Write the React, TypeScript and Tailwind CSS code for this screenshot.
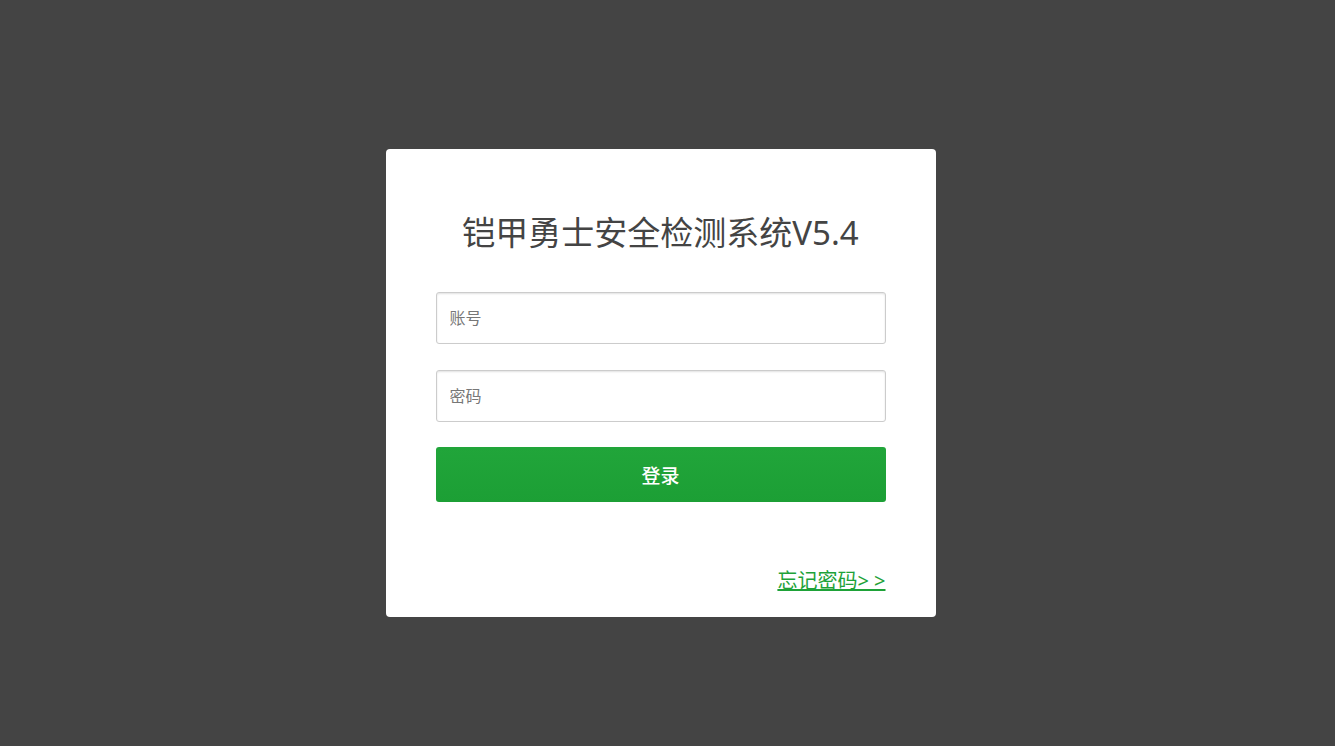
import React from "react";

export default function App() {
  return (
    <div
      className="w-full h-[746px] bg-[#444444] flex justify-center pr-[14px]"
      style={{ fontFamily: '"Noto Sans", "Noto Sans CJK SC", sans-serif' }}
    >
      <div className="mt-[149px] w-[550px] h-[468px] bg-white rounded-[4px] px-[50px] flex flex-col">
        <h1 className="mt-[60px] text-center text-[33px] leading-[48px] text-[#444]">
          铠甲勇士安全检测系统V5.4
        </h1>
        <input
          className="mt-[35px] h-[52px] w-full border border-[#cccccc] rounded-[3px] px-[13px] text-[16px] text-[#555] placeholder:text-[#777] shadow-[inset_0_1px_2px_rgba(0,0,0,0.12)] outline-none"
          placeholder="账号"
        />
        <input
          type="password"
          className="mt-[26px] h-[52px] w-full border border-[#cccccc] rounded-[3px] px-[13px] text-[16px] text-[#555] placeholder:text-[#777] shadow-[inset_0_1px_2px_rgba(0,0,0,0.12)] outline-none"
          placeholder="密码"
        />
        <button className="mt-[25px] h-[55px] w-full bg-gradient-to-b from-[#21a53a] to-[#1c9f35] rounded-[3px] text-white text-[19px] font-medium pt-[3px]">
          登录
        </button>
        <div className="mt-[66px] flex justify-end">
          <a href="#" className="text-[20px] leading-[26px] text-[#1ea238] underline">
            忘记密码&gt; &gt;
          </a>
        </div>
      </div>
    </div>
  );
}
